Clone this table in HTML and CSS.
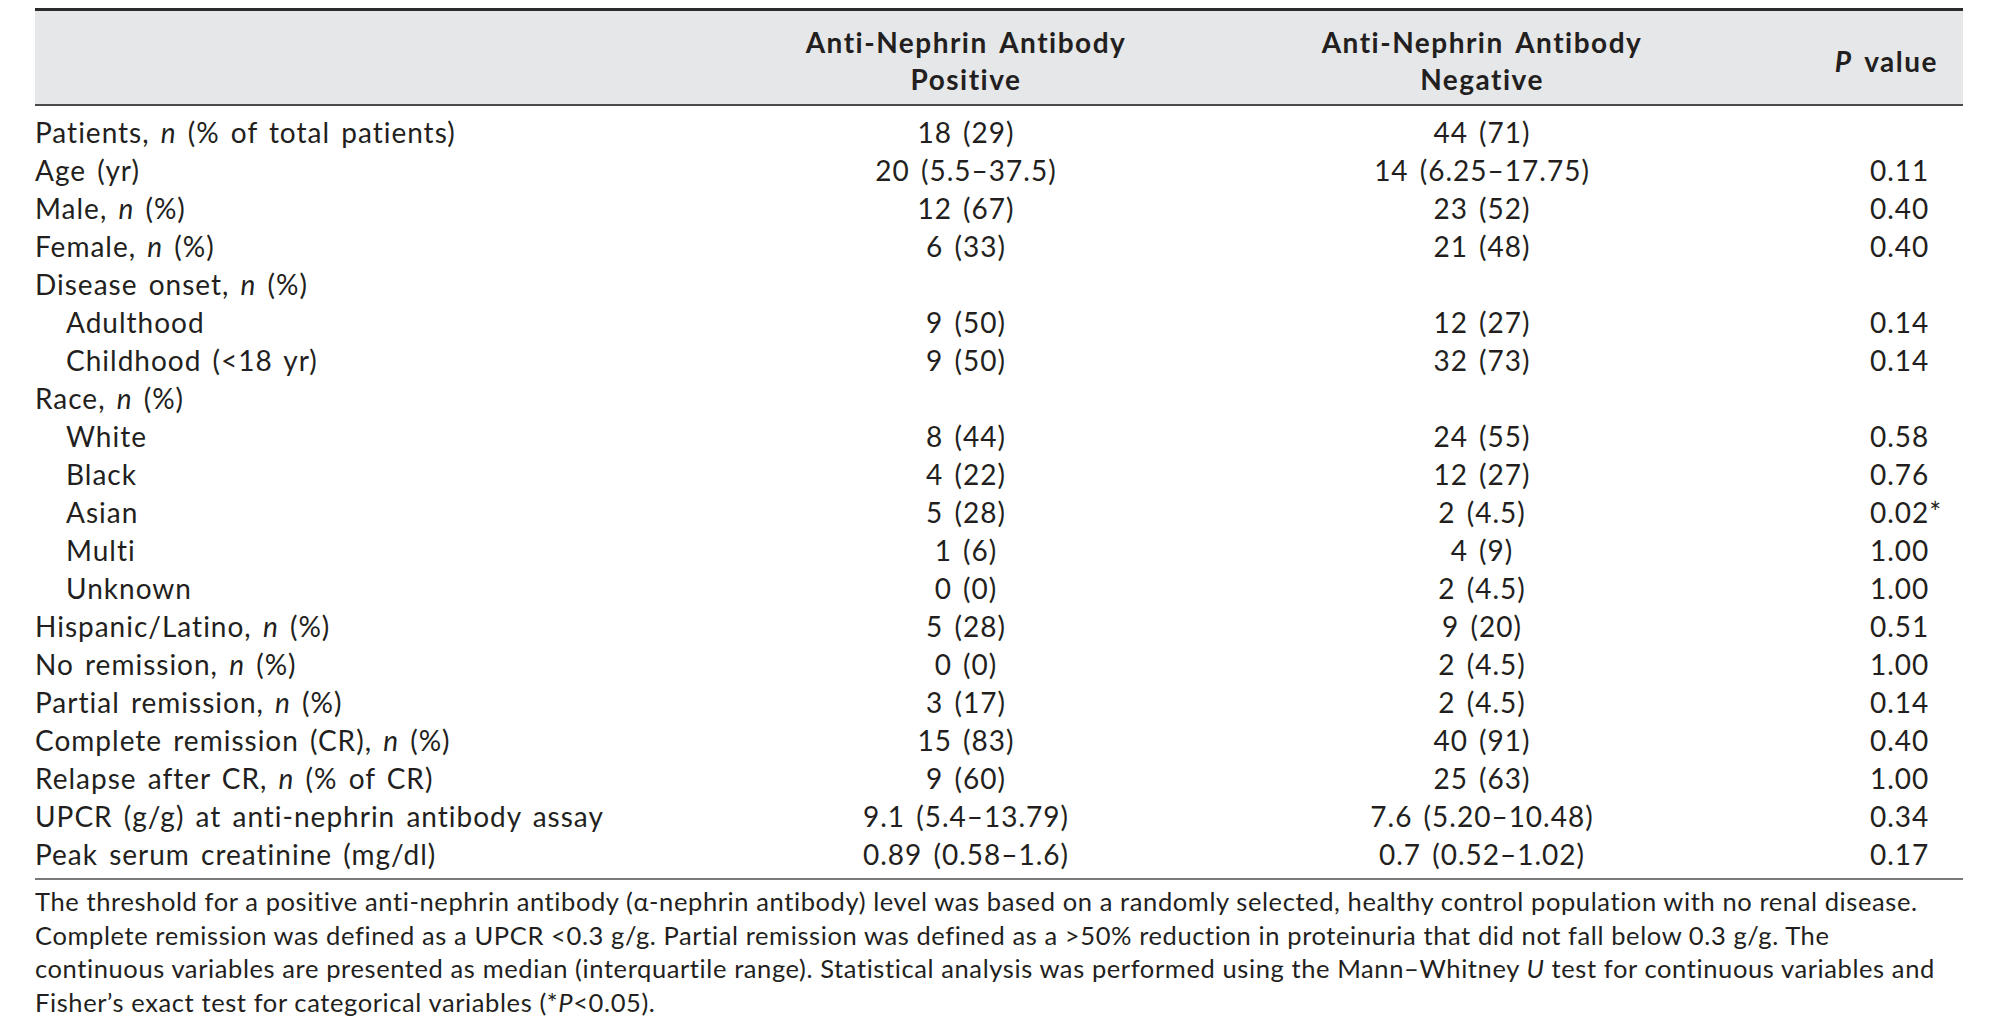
FILE: index.html
```html
<!DOCTYPE html>
<html lang="en">
<head>
    <meta charset="UTF-8">
    <title>Anti-nephrin antibody cohort characteristics</title>
    <link rel="stylesheet" href="styles.css">
</head>
<body>

    <table class="cohort">
        <colgroup>
            <col class="col-label">
            <col class="col-pos">
            <col class="col-neg">
            <col class="col-p">
        </colgroup>
        <thead>
            <tr>
                <th></th>
                <th class="num">Anti-Nephrin Antibody<br>Positive</th>
                <th class="num">Anti-Nephrin Antibody<br>Negative</th>
                <th class="pval"><i>P</i> value</th>
            </tr>
        </thead>
        <tbody>
            <tr class="first"><td>Patients, <i>n</i> (% of total patients)</td><td class="num">18 (29)</td><td class="num">44 (71)</td><td class="pval"></td></tr>
            <tr><td>Age (yr)</td><td class="num">20 (5.5–37.5)</td><td class="num">14 (6.25–17.75)</td><td class="pval">0.11</td></tr>
            <tr><td>Male, <i>n</i> (%)</td><td class="num">12 (67)</td><td class="num">23 (52)</td><td class="pval">0.40</td></tr>
            <tr><td>Female, <i>n</i> (%)</td><td class="num">6 (33)</td><td class="num">21 (48)</td><td class="pval">0.40</td></tr>
            <tr><td>Disease onset, <i>n</i> (%)</td><td class="num"></td><td class="num"></td><td class="pval"></td></tr>
            <tr><td class="sub">Adulthood</td><td class="num">9 (50)</td><td class="num">12 (27)</td><td class="pval">0.14</td></tr>
            <tr><td class="sub">Childhood (&lt;18 yr)</td><td class="num">9 (50)</td><td class="num">32 (73)</td><td class="pval">0.14</td></tr>
            <tr><td>Race, <i>n</i> (%)</td><td class="num"></td><td class="num"></td><td class="pval"></td></tr>
            <tr><td class="sub">White</td><td class="num">8 (44)</td><td class="num">24 (55)</td><td class="pval">0.58</td></tr>
            <tr><td class="sub">Black</td><td class="num">4 (22)</td><td class="num">12 (27)</td><td class="pval">0.76</td></tr>
            <tr><td class="sub">Asian</td><td class="num">5 (28)</td><td class="num">2 (4.5)</td><td class="pval">0.02*</td></tr>
            <tr><td class="sub">Multi</td><td class="num">1 (6)</td><td class="num">4 (9)</td><td class="pval">1.00</td></tr>
            <tr><td class="sub">Unknown</td><td class="num">0 (0)</td><td class="num">2 (4.5)</td><td class="pval">1.00</td></tr>
            <tr><td>Hispanic/Latino, <i>n</i> (%)</td><td class="num">5 (28)</td><td class="num">9 (20)</td><td class="pval">0.51</td></tr>
            <tr><td>No remission, <i>n</i> (%)</td><td class="num">0 (0)</td><td class="num">2 (4.5)</td><td class="pval">1.00</td></tr>
            <tr><td>Partial remission, <i>n</i> (%)</td><td class="num">3 (17)</td><td class="num">2 (4.5)</td><td class="pval">0.14</td></tr>
            <tr><td>Complete remission (CR), <i>n</i> (%)</td><td class="num">15 (83)</td><td class="num">40 (91)</td><td class="pval">0.40</td></tr>
            <tr><td>Relapse after CR, <i>n</i> (% of CR)</td><td class="num">9 (60)</td><td class="num">25 (63)</td><td class="pval">1.00</td></tr>
            <tr><td>UPCR (g/g) at anti-nephrin antibody assay</td><td class="num">9.1 (5.4–13.79)</td><td class="num">7.6 (5.20–10.48)</td><td class="pval">0.34</td></tr>
            <tr class="last"><td>Peak serum creatinine (mg/dl)</td><td class="num">0.89 (0.58–1.6)</td><td class="num">0.7 (0.52–1.02)</td><td class="pval">0.17</td></tr>
        </tbody>
    </table>

    <p class="footnote">
        The threshold for a positive anti-nephrin antibody (α-nephrin antibody) level was based on a randomly selected, healthy control population with no renal disease.<br>
        Complete remission was defined as a UPCR &lt;0.3 g/g. Partial remission was defined as a &gt;50% reduction in proteinuria that did not fall below 0.3 g/g. The<br>
        continuous variables are presented as median (interquartile range). Statistical analysis was performed using the Mann–Whitney <i>U</i> test for continuous variables and<br>
        Fisher’s exact test for categorical variables (*<i>P</i>&lt;0.05).
    </p>

</body>
</html>
```

FILE: styles.css
```css
body {
    margin: 0;
    padding: 8px 36px 0 35px;
    font-family: Lato, "Open Sans", sans-serif;
    color: #231f20;
    background: #fff;
}
.cohort {
    width: 1928px;
    border-collapse: collapse;
    table-layout: fixed;
    font-size: 28px;
}
.col-label { width: 701px; }
.col-pos { width: 460px; }
.col-neg { width: 572px; }
.col-p { width: 195px; }

.cohort thead tr {
    background-color: #e6e7e8;
    border-top: 3px solid #2b2b2b;
    border-bottom: 2px solid #4a4a4a;
}
.cohort th {
    font-weight: bold;
    line-height: 37px;
    letter-spacing: 1.5px;
    word-spacing: 4px;
    padding: 13px 0 6px;
    vertical-align: middle;
}
.cohort th.pval {
    text-align: right;
    padding-right: 25px;
}
.cohort td {
    padding: 0;
    line-height: 38px;
    letter-spacing: 1px;
    word-spacing: 3px;
    white-space: nowrap;
}
.cohort tbody tr.first td { padding-top: 7px; }
.cohort tbody tr.last td { padding-bottom: 5px; }
.cohort tbody tr.last { border-bottom: 2px solid #7a7a7a; }

.num { text-align: center; }
td.pval {
    text-align: left;
    padding-left: 102px !important;
}
.sub { padding-left: 31px !important; }

.footnote {
    margin: 5px 0 0;
    font-size: 25.5px;
    line-height: 33.7px;
    letter-spacing: 0.6px;
    white-space: nowrap;
}
```
